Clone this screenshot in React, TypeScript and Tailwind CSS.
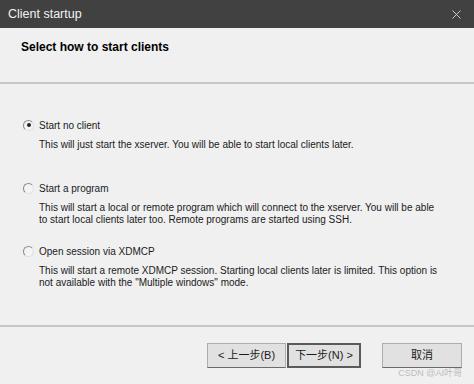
import { X } from 'lucide-react'

const options = [
  {
    label: 'Start no client',
    checked: true,
    desc: ['This will just start the xserver. You will be able to start local clients later.'],
  },
  {
    label: 'Start a program',
    checked: false,
    desc: [
      'This will start a local or remote program which will connect to the xserver. You will be able',
      'to start local clients later too. Remote programs are started using SSH.',
    ],
  },
  {
    label: 'Open session via XDMCP',
    checked: false,
    desc: [
      'This will start a remote XDMCP session. Starting local clients later is limited. This option is',
      'not available with the "Multiple windows" mode.',
    ],
  },
]

function Radio({ checked }: { checked: boolean }) {
  return (
    <span className="w-[11px] h-[11px] rounded-full border border-[#8a8a8a] border-r-[#e0e0e0] border-b-[#e0e0e0] bg-[#f4f4f4] flex items-center justify-center">
      {checked && <span className="w-[4px] h-[4px] rounded-full bg-[#222]" />}
    </span>
  )
}

export default function App() {
  return (
    <div
      className="relative w-[474px] h-[384px] bg-[#f0f0f0] flex flex-col text-[#1a1a1a] overflow-hidden"
      style={{ fontFamily: '"Liberation Sans", Arial, sans-serif' }}
    >
      {/* Title bar */}
      <div className="h-[28px] bg-[#414141] flex items-center justify-between pl-[8px] pr-[10px]">
        <span className="text-[12.5px] text-[#f2f2f2]">Client startup</span>
        <X size={15} strokeWidth={1.3} className="text-[#e8e8e8]" />
      </div>

      {/* Header */}
      <div className="h-[56px] pl-[21px] pt-[10px] border-b-2 border-[#c6c6c6]">
        <h1 className="text-[12px] font-bold text-black">Select how to start clients</h1>
      </div>

      {/* Options */}
      <div className="flex-1 pl-[23px] pt-[34px] flex flex-col border-b-2 border-[#c6c6c6]">
        {options.map((o) => (
          <div key={o.label} className="flex flex-col h-[63px]">
            <div className="flex items-center gap-[5px] h-[14px]">
              <Radio checked={o.checked} />
              <span className="text-[10px]">{o.label}</span>
            </div>
            <div className="pl-[16px] mt-[7px] text-[10px] leading-[12px]">
              {o.desc.map((d) => (
                <div key={d}>{d}</div>
              ))}
            </div>
          </div>
        ))}
      </div>

      {/* Buttons */}
      <div
        className="h-[57px] flex items-start pt-[16px] pl-[207px] text-[11px]"
        style={{ fontFamily: '"Liberation Sans", "Noto Sans CJK SC", sans-serif' }}
      >
        <button className="w-[79px] h-[25px] bg-[#e1e1e1] border border-[#adadad] border-b-[#6a6a6a]">
          &lt; 上一步(B)
        </button>
        <button className="w-[74px] h-[25px] bg-[#e1e1e1] border-2 border-[#5a5a5a] ml-[1px]">
          下一步(N) &gt;
        </button>
        <button className="w-[80px] h-[25px] bg-[#e1e1e1] border border-[#adadad] border-b-[#6a6a6a] ml-[21px]">
          取消
        </button>
      </div>

      <span
        className="absolute right-[12px] bottom-[4px] text-[9px] text-[#bdbdbd]"
        style={{ fontFamily: '"Liberation Sans", "Noto Sans CJK SC", sans-serif' }}
      >
        CSDN @AI叶哥
      </span>
    </div>
  )
}
